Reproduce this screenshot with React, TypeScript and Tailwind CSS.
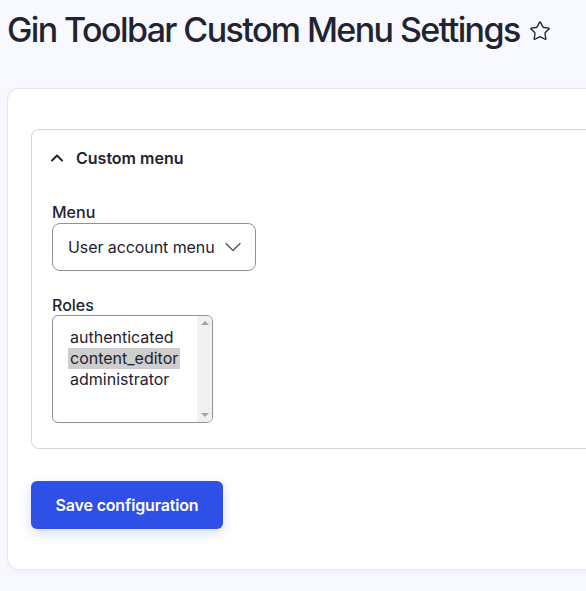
import { ChevronDown, ChevronUp, Star } from 'lucide-react'

const roles = ['authenticated', 'content_editor', 'administrator']

export default function App() {
  return (
    <div className="relative h-[591px] w-[586px] overflow-hidden bg-[#f8f9fe] font-['Inter',sans-serif] text-[#222330]">
      <header className="flex items-center gap-[9px] pl-[7px] pt-[10px]">
        <h1 className="whitespace-nowrap text-[34px] font-medium leading-[40px] tracking-[-0.047em] text-[#222330]">
          Gin Toolbar Custom Menu Settings
        </h1>
        <Star size={22} strokeWidth={1.5} className="mt-[1px] shrink-0 text-[#222330]" />
      </header>

      <main className="ml-[7px] mt-[38px] w-[800px] rounded-[12px] border border-[#e6e7ee] bg-white px-[23px] pb-[40px] pt-[40px] shadow-[0_2px_6px_rgba(0,0,0,0.04)]">
        <section className="rounded-[8px] border border-[#d4d4d8] pb-[25px]">
          <div className="flex h-[56px] items-center gap-[9px] pl-[15px]">
            <ChevronUp size={20} strokeWidth={2.4} className="text-[#222330]" />
            <span className="text-[16px] font-semibold text-[#222330]">Custom menu</span>
          </div>

          <div className="px-[20px] pt-[16px]">
            <label className="block text-[16px] font-medium leading-[20px]">Menu</label>
            <div className="mt-[1px] flex h-[48px] w-[204px] items-center justify-between rounded-[8px] border border-[#8e929c] pl-[15px] pr-[8px]">
              <span className="text-[16px] tracking-[-0.005em] text-[#222330]">User account menu</span>
              <ChevronDown size={28} strokeWidth={1.2} className="text-[#545560]" />
            </div>

            <label className="mt-[24px] block text-[16px] font-medium leading-[20px]">Roles</label>
            <div className="flex h-[108px] w-[161px] overflow-hidden rounded-[6px] border border-[#8e929c]">
              <ul className="flex-1 pl-[15px] pt-[11px]">
                {roles.map((r) => (
                  <li
                    key={r}
                    className={
                      'w-fit px-[2px] text-[16px] leading-[21px] text-[#222330] ' +
                      (r === 'content_editor' ? 'bg-[#cecece]' : '')
                    }
                  >
                    {r}
                  </li>
                ))}
              </ul>
              <div className="flex w-[15px] flex-col items-center justify-between bg-[#f1f1f1] py-[5px]">
                <span className="h-0 w-0 border-x-[4px] border-b-[4px] border-x-transparent border-b-[#a3a3a3]" />
                <span className="h-0 w-0 border-x-[4px] border-t-[4px] border-x-transparent border-t-[#a3a3a3]" />
              </div>
            </div>
          </div>
        </section>

        <button className="mt-[32px] h-[48px] w-[192px] rounded-[6px] bg-[#2f50e6] text-[16px] font-semibold tracking-[-0.01em] text-white shadow-[0_4px_12px_rgba(47,80,230,0.2)]">
          Save configuration
        </button>
      </main>
    </div>
  )
}
